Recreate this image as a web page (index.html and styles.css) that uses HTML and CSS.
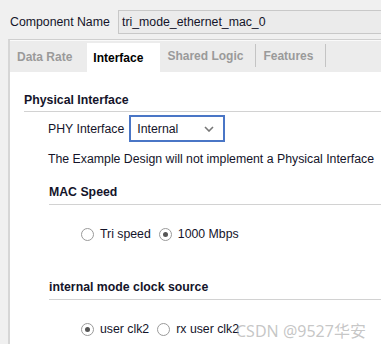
FILE: index.html
```html
<!DOCTYPE html>
<html lang="en">
  <head>
    <meta charset="utf-8">
    <title>Customize IP</title>
    <link rel="stylesheet" href="styles.css">
  </head>
  <body>
    <div class="name-row">
      <span class="name-label">Component Name</span>
      <div class="name-input">tri_mode_ethernet_mac_0</div>
    </div>

    <div class="panel">
      <div class="tabs">
        <div class="tab">Data Rate</div>
        <div class="tab active">Interface</div>
        <div class="tab sep">Shared Logic</div>
        <div class="tab sep">Features</div>
      </div>

      <div class="page">
        <h2 class="group">Physical Interface</h2>
        <div class="field">
          <span>PHY Interface</span>
          <div class="select">
            <span>Internal</span>
            <svg width="10" height="6" viewBox="0 0 10 6"><path d="M1 1 L5 5 L9 1" fill="none" stroke="#777" stroke-width="1.6"/></svg>
          </div>
        </div>
        <p class="note">The Example Design will not implement a Physical Interface</p>

        <div class="sub speed">
          <h3 class="group">MAC Speed</h3>
          <div class="radios">
            <label class="opt"><span class="radio"></span>Tri speed</label>
            <label class="opt"><span class="radio on"></span>1000 Mbps</label>
          </div>
        </div>

        <div class="sub clock">
          <h3 class="group">internal mode clock source</h3>
          <div class="radios">
            <label class="opt"><span class="radio on"></span>user clk2</label>
            <label class="opt"><span class="radio"></span>rx user clk2</label>
          </div>
        </div>
      </div>
    </div>
    <div class="mark">CSDN @9527华安</div>
  </body>
</html>
```

FILE: styles.css
```css
html, body {
  margin: 0;
  padding: 0;
}
body {
  background: #f0f0f0;
  font-family: "Liberation Sans", Arial, sans-serif;
  font-size: 12.3px;
  color: #14142a;
  width: 381px;
  height: 344px;
  overflow: hidden;
  position: relative;
}
.name-row {
  display: flex;
  align-items: center;
  padding: 10px 0 0 10px;
  height: 24px;
}
.name-label {
  width: 108px;
}
.name-input {
  flex: 1;
  height: 22px;
  line-height: 22px;
  padding-left: 3px;
  background: #ebebeb;
  border: 1px solid #c8c8c8;
  border-right: none;
}
.panel {
  margin: 5px 0 0 8px;
  border-top: 1px solid #cfcfcf;
  border-left: 2px solid #d6d6d6;
  background: #fff;
  height: 310px;
}
.tabs {
  display: flex;
  height: 31px;
  background: #ececec;
  border-top: 1px solid #fafafa;
}
.tab {
  display: flex;
  align-items: center;
  padding: 0 15px 0 7px;
  font-size: 12px;
  font-weight: bold;
  color: #9a9a9a;
}
.tab.active {
  background: #fff;
  color: #000;
  padding: 0 17px 0 6px;
  margin-top: 2px;
}
.tab.sep {
  padding-right: 12px;
  border-right: 1px solid #c4c4c4;
  margin: 3px 0 5px;
}
.page {
  padding: 21px 0 0 14px;
}
.group {
  margin: 0;
  font-size: 12.3px;
  font-weight: bold;
  padding-bottom: 4px;
  border-bottom: 1px solid #d2d2d2;
}
.field {
  display: flex;
  align-items: center;
  gap: 5px;
  margin: 3px 0 0 24px;
}
.select {
  display: flex;
  align-items: center;
  justify-content: space-between;
  width: 77px;
  height: 23px;
  padding: 0 9px 0 6px;
  border: 2px solid #4a76c6;
  background: #fff;
}
.note {
  margin: 10px 0 0 24px;
}
.sub {
  margin: 19px 0 0 25px;
}
.sub.clock {
  margin-top: 39px;
}
.sub h3 {
  padding-bottom: 5px;
}
.radios {
  display: flex;
  align-items: center;
  gap: 8px;
  margin: 22px 0 0 32px;
}
.opt {
  display: flex;
  align-items: center;
  gap: 6px;
}
.radio {
  width: 11px;
  height: 11px;
  border: 1px solid #9a9a9a;
  border-radius: 50%;
  background: #fff;
  position: relative;
}
.radio.on::after {
  content: "";
  position: absolute;
  left: 3px;
  top: 3px;
  width: 5px;
  height: 5px;
  border-radius: 50%;
  background: #555;
}
.mark {
  position: absolute;
  left: 236px;
  top: 318px;
  font-family: "Noto Sans", "Noto Sans CJK SC", sans-serif;
  font-size: 16px;
  color: rgba(150, 150, 150, 0.55);
}
```
